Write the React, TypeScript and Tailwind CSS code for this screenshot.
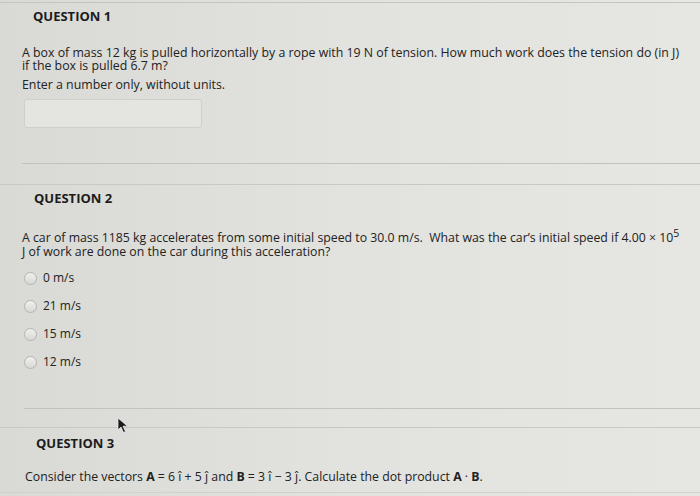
import React from "react";

const font = { fontFamily: '"Open Sans", "Liberation Sans", sans-serif' };

function Radio({ label }: { label: string }) {
  return (
    <div className="flex h-[28px] items-center gap-[6px]">
      <span className="block h-[13px] w-[13px] rounded-full border border-[#b4b4b0] bg-gradient-to-b from-[#f0f0ee] to-[#d8d8d4]" />
      <span className="text-[12px] text-[#222]">{label}</span>
    </div>
  );
}

function Cursor() {
  return (
    <svg
      className="absolute left-[117px] top-[417px]"
      width="12"
      height="17"
      viewBox="0 0 12 17"
    >
      <path d="M1 1 L1 13 L4 10 L6.5 15.5 L8.5 14.5 L6 9.2 L10.5 9.2 Z" fill="#1a1a1a" stroke="#e8e8e8" strokeWidth="0.8" />
    </svg>
  );
}

export default function App() {
  return (
    <div
      className="relative h-[496px] w-[700px] overflow-hidden bg-gradient-to-r from-[#d9d9d5] via-[#e2e2df] to-[#e6e6e3] text-[#222]"
      style={font}
    >
      <div className="mt-[2px] border-t border-[#c4c4c0]" />

      {/* question 1 */}
      <div className="pl-[33px] pt-[5px] text-[13px] font-bold leading-[16px] text-[#1c1c1c]">
        QUESTION 1
      </div>
      <div className="mt-[22px] whitespace-nowrap pl-[22px] text-[12.35px] leading-[13px]">
        A box of mass 12 kg is pulled horizontally by a rope with 19 N of tension. How much work does the tension do (in J)
        <br />
        if the box is pulled 6.7 m?
      </div>
      <div className="mt-[6px] pl-[22px] text-[12.35px] leading-[13px]">
        Enter a number only, without units.
      </div>
      <div className="ml-[24px] mt-[8px] h-[29px] w-[178px] rounded-[3px] border border-[#cfcfcb] bg-[#e4e4e1]" />
      <div className="ml-[22px] mt-[35px] border-t border-[#c2c2be]" />
      <div className="mt-[20px] border-t border-[#c8c8c4]" />

      {/* question 2 */}
      <div className="pl-[34px] pt-[5px] text-[13px] font-bold leading-[16px] text-[#1c1c1c]">
        QUESTION 2
      </div>
      <div className="mt-[25px] whitespace-nowrap pl-[22px] text-[12.3px] leading-[14px]">
        A car of mass 1185 kg accelerates from some initial speed to 30.0 m/s.&nbsp; What was the car’s initial speed if 4.00 × 10
        <span className="relative -top-[5px] text-[10.5px]">5</span>
        <br />J of work are done on the car during this acceleration?
      </div>
      <div className="mt-[5px] flex flex-col pl-[24px]">
        <Radio label="0 m/s" />
        <Radio label="21 m/s" />
        <Radio label="15 m/s" />
        <Radio label="12 m/s" />
      </div>
      <div className="ml-[24px] mt-[32px] border-t border-[#c2c2be]" />
      <div className="mt-[18px] border-t border-[#c8c8c4]" />

      {/* question 3 */}
      <div className="pl-[36px] pt-[7px] text-[13px] font-bold leading-[16px] text-[#1c1c1c]">
        QUESTION 3
      </div>
      <div className="mt-[19px] whitespace-nowrap pl-[25px] text-[12.3px] leading-[14px]">
        Consider the vectors <b>A</b> = 6 î + 5 ĵ and <b>B</b> = 3 î − 3 ĵ. Calculate the dot product <b>A</b> · <b>B</b>.
      </div>
      <div className="mt-[8px] border-t border-[#d0d0cc]" />

      <Cursor />
    </div>
  );
}
